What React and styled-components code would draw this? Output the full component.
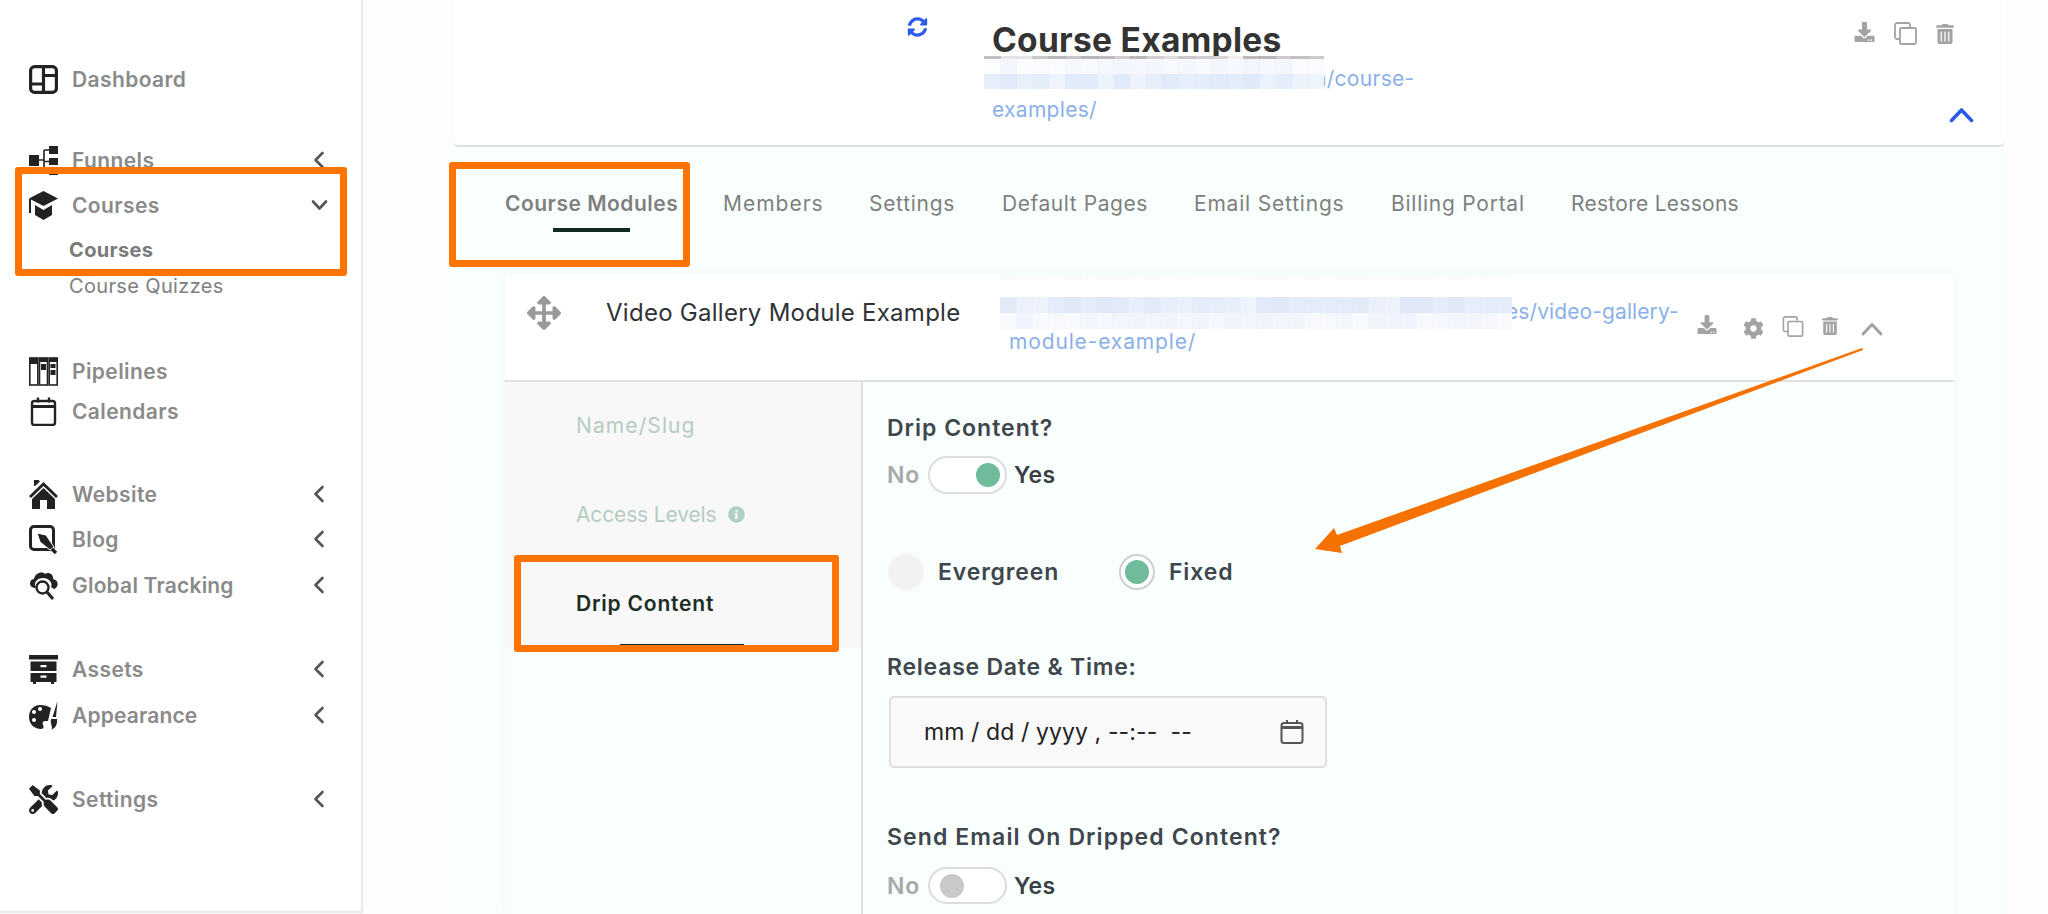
import React from "react";
import styled, { createGlobalStyle } from "styled-components";
import { FaSyncAlt, FaArrowsAlt, FaCog, FaTrashAlt, FaInfoCircle, FaDownload, FaTools } from "react-icons/fa";

const Global = createGlobalStyle`
  html, body { margin: 0; padding: 0; background: #fff; overflow: hidden; }
  body { font-family: Inter, "Open Sans", sans-serif; }
  * { box-sizing: border-box; }
`;

const Page = styled.div`
  position: relative;
  display: flex;
  width: 2048px;
  height: 914px;
  overflow: hidden;
  background: #fdfdfd;
`;

/* ---------- sidebar ---------- */
const Sidebar = styled.aside`
  flex: 0 0 363px;
  height: 913px;
  padding: 64px 36px 0 29px;
  background: #fff;
  border-right: 2px solid #e9e9e9;
  border-bottom: 2px solid #e9e9e9;
`;
const NavRow = styled.div`
  display: flex;
  align-items: center;
  height: 30px;
  margin-top: ${p => p.$mt || 0}px;
  gap: 14px;
`;
const NavIcon = styled.span`
  flex: 0 0 29px;
  width: 29px;
  height: 29px;
  color: #222;
  display: block;
  svg { display: block; width: 29px; height: 29px; }
`;
const NavLabel = styled.span`
  font-size: 21px;
  font-weight: 600;
  letter-spacing: ${p => p.$ls ?? 0.4}px;
  color: #8a8a8a;
`;
const NavChevron = styled.svg`
  margin-left: auto;
  width: 12px;
  height: 18px;
  fill: none;
  stroke: #555;
  stroke-width: 2.6;
  stroke-linecap: round;
  stroke-linejoin: round;
`;
const NavChevronDown = styled.svg`
  margin-left: auto;
  margin-right: -3px;
  width: 17px;
  height: 12px;
  fill: none;
  stroke: #555;
  stroke-width: 2.6;
  stroke-linecap: round;
  stroke-linejoin: round;
`;
const SubRow = styled.div`
  height: 30px;
  line-height: 30px;
  margin-top: ${p => p.$mt}px;
  margin-left: 40px;
  font-size: 20px;
  letter-spacing: 0.35px;
  font-weight: ${p => (p.$active ? 700 : 400)};
  color: ${p => (p.$active ? "#7a7a7a" : "#808080")};
`;

/* ---------- main ---------- */
const Main = styled.main`
  flex: 1;
  padding-left: 90px;
  height: 914px;
  overflow: hidden;
`;
const Panel = styled.div`
  width: 1552px;
  height: 914px;
  background: #f8fffc;
`;
const CourseCard = styled.section`
  display: flex;
  height: 147px;
  padding: 0 31px 0 454px;
  background: #fff;
  border-bottom: 2px solid #dedede;
  border-radius: 0 0 6px 6px;
`;
const RefreshIcon = styled.span`
  color: #2a5bea;
  margin-top: 17px;
  width: 21px;
  height: 20px;
  svg { display: block; width: 21px; height: 20px; }
`;
const TitleBlock = styled.div`
  position: relative;
  margin-left: 64px;
  width: 428px;
  padding-top: 20px;
`;
const CourseTitle = styled.h1`
  margin: 0 0 3px;
  font-size: 33.5px;
  line-height: 40px;
  font-weight: 700;
  letter-spacing: 0.3px;
  color: #333;
`;
const LinkText = styled.a`
  display: block;
  font-size: 21px;
  line-height: ${p => p.$lh}px;
  text-indent: ${p => p.$indent}px;
  letter-spacing: 0.3px;
  color: #8ab0ea;
  font-weight: 400;
`;
const LinkPart = styled.span`
  letter-spacing: ${p => p.$ls}px;
`;
const MosaicOver = styled.svg`
  position: absolute;
  left: ${p => p.$x}px;
  top: ${p => p.$y}px;
  display: block;
`;
const CourseActions = styled.div`
  margin-left: auto;
  display: flex;
  flex-direction: column;
  width: 121px;
  padding-top: 22px;
`;
const IconRow = styled.div`
  display: flex;
  align-items: flex-start;
  color: #a3a3a3;
`;
const ToolIcon = styled.span`
  display: block;
  width: ${p => p.$w}px;
  height: ${p => p.$h}px;
  margin-left: ${p => p.$ml || 0}px;
  margin-top: ${p => p.$mt || 0}px;
  color: #a3a3a3;
  svg { display: block; width: 100%; height: 100%; }
`;
const CollapseBlue = styled.svg`
  align-self: flex-end;
  margin-top: 62px;
  width: 25px;
  height: 16px;
  fill: none;
  stroke: #2a5bea;
  stroke-width: 3.6;
  stroke-linecap: round;
  stroke-linejoin: round;
`;
const Tabs = styled.nav`
  display: flex;
  align-items: flex-start;
  height: 127px;
  padding: 44px 0 0 52px;
`;
const Tab = styled.div`
  flex: 0 0 ${p => p.$w}px;
  font-size: 21px;
  line-height: 26px;
  letter-spacing: ${p => p.$ls}px;
  font-weight: ${p => (p.$active ? 600 : 400)};
  color: ${p => (p.$active ? "#808080" : "#7f7f7f")};
  white-space: nowrap;
`;
const TabBar = styled.div`
  width: 77px;
  height: 4px;
  margin: 11px 0 0 48px;
  background: #12291f;
`;
const Module = styled.section`
  position: relative;
  margin-left: 52px;
  width: 1449px;
  height: 640px;
  box-shadow: 0 0 8px rgba(0,0,0,0.04);
`;
const ModuleHeader = styled.header`
  display: flex;
  align-items: flex-start;
  height: 108px;
  padding-left: 22px;
  background: #fff;
  border-bottom: 2px solid #e0e0e0;
  border-radius: 6px 6px 0 0;
`;
const MoveIcon = styled.span`
  display: block;
  width: 34px;
  height: 34px;
  margin-top: 22px;
  color: #999;
  svg { display: block; width: 100%; height: 100%; }
`;
const ModuleTitle = styled.h2`
  margin: 26px 0 0 45px;
  width: 403px;
  font-size: 24px;
  line-height: 26px;
  font-weight: 400;
  letter-spacing: 0.27px;
  color: #2f3336;
  white-space: nowrap;
`;
const ModuleLink = styled.div`
  position: relative;
  width: 680px;
  margin-top: 23px;
`;
const ModuleActions = styled.div`
  display: flex;
  align-items: flex-start;
  margin-left: 8px;
  padding-top: 41px;
`;
const CollapseGray = styled.svg`
  margin-left: 23px;
  margin-top: 7px;
  width: 22px;
  height: 14px;
  fill: none;
  stroke: #a0a0a0;
  stroke-width: 2.8;
  stroke-linecap: round;
  stroke-linejoin: round;
`;
const ModuleBody = styled.div`
  display: flex;
  height: 532px;
`;
const LeftColumn = styled.div`
  flex: 0 0 358px;
  border-right: 2px solid #dfdfdf;
`;
const SideNav = styled.div`
  height: 266px;
  background: #f8f8f8;
`;
const SideItem = styled.div`
  position: relative;
  display: flex;
  align-items: center;
  gap: 12px;
  height: 89px;
  padding: 0 0 2px 71px;
  font-size: 21px;
  letter-spacing: ${p => p.$ls}px;
  font-weight: ${p => (p.$active ? 600 : 400)};
  color: ${p => (p.$active ? "#1a2d24" : "#b5ccc2")};
  ${p => p.$active && `
    &::after {
      content: "";
      position: absolute;
      left: 115px;
      bottom: 2px;
      width: 124px;
      height: 3px;
      background: #12291f;
    }
  `}
`;
const InfoIcon = styled.span`
  display: block;
  width: 17px;
  height: 17px;
  color: #afd0c3;
  svg { display: block; width: 17px; height: 17px; }
`;
const FormColumn = styled.div`
  flex: 1;
  padding: 33px 0 0 24px;
`;
const FieldLabel = styled.div`
  font-size: 23px;
  line-height: 26px;
  font-weight: 600;
  letter-spacing: ${p => p.$ls}px;
  color: #3f464d;
  margin-top: ${p => p.$mt || 0}px;
`;
const ToggleRow = styled.div`
  display: flex;
  align-items: center;
  height: ${p => p.$h}px;
  margin-top: ${p => p.$mt}px;
`;
const ToggleNo = styled.span`
  flex: 0 0 41px;
  font-size: 23px;
  font-weight: 600;
  letter-spacing: 0.9px;
  color: #a9a9a9;
`;
const ToggleYes = styled.span`
  margin-left: 7px;
  font-size: 23px;
  font-weight: 600;
  letter-spacing: 0.4px;
  color: #3a3f46;
`;
const ToggleTrack = styled.span`
  display: flex;
  align-items: center;
  justify-content: ${p => (p.$on ? "flex-end" : "flex-start")};
  width: 79px;
  height: 100%;
  padding: 0 ${p => (p.$on ? 5 : 10)}px;
  background: #fff;
  border: 2px solid #dcdcdc;
  border-radius: 20px;
`;
const ToggleKnob = styled.span`
  width: 24px;
  height: 24px;
  border-radius: 50%;
  background: ${p => (p.$on ? "#6fbb9b" : "#c9c9c9")};
`;
const RadioRow = styled.div`
  display: flex;
  align-items: center;
  height: 36px;
  margin: 60px 0 0 1px;
`;
const RadioOption = styled.label`
  display: flex;
  align-items: center;
  gap: 14px;
  width: ${p => p.$w}px;
  font-size: 23px;
  font-weight: 600;
  letter-spacing: 0.85px;
  color: #3f464d;
`;
const RadioDot = styled.span`
  display: flex;
  align-items: center;
  justify-content: center;
  width: 36px;
  height: 36px;
  border-radius: 50%;
  background: ${p => (p.$on ? "#fff" : "#f2f2f2")};
  border: ${p => (p.$on ? "2px solid #cfcfcf" : "none")};
  &::after {
    content: "";
    display: ${p => (p.$on ? "block" : "none")};
    width: 24px;
    height: 24px;
    border-radius: 50%;
    background: #6fbb9b;
  }
`;
const DateField = styled.div`
  display: flex;
  align-items: center;
  width: 438px;
  height: 72px;
  margin-top: 16px;
  margin-left: 2px;
  padding: 0 21px 0 33px;
  background: #f9f9f9;
  border: 2px solid #e0e0e0;
  border-radius: 5px;
  font-size: 23px;
  letter-spacing: 0.1px;
  color: #222;
  white-space: pre;
`;
const CalendarIcon = styled.svg`
  margin-left: auto;
  width: 24px;
  height: 24px;
  fill: none;
  stroke: #555;
  stroke-width: 2;
`;

/* ---------- annotations ---------- */
const Callout = styled.div`
  position: absolute;
  left: ${p => p.$x}px;
  top: ${p => p.$y}px;
  width: ${p => p.$w}px;
  height: ${p => p.$h}px;
  border: 7px solid #ff7300;
  border-radius: 3px;
  pointer-events: none;
`;
const ArrowLayer = styled.svg`
  position: absolute;
  left: 0;
  top: 0;
  width: 2048px;
  height: 914px;
  pointer-events: none;
`;

/* ---------- drawings ---------- */
const chevronLeft = (
  <NavChevron viewBox="0 0 12 18"><path d="M9.5 2 L2.5 9 L9.5 16" /></NavChevron>
);

const icons = {
  dashboard: (
    <svg viewBox="0 0 29 29" fill="none" stroke="currentColor" strokeWidth="3.2">
      <rect x="1.6" y="1.6" width="25.8" height="25.8" rx="4" />
      <path d="M14.5 2v25M2 19h12.5M14.5 10.5H27" />
    </svg>
  ),
  funnels: (
    <svg viewBox="0 0 29 29" fill="currentColor">
      <rect x="0" y="9" width="10" height="11" />
      <rect x="20" y="0" width="9" height="8" />
      <rect x="20" y="12" width="9" height="7" />
      <rect x="20" y="22" width="9" height="7" />
      <path d="M10 14h5M15 4h5M15 15.5h5M15 25h5M15 4v21" stroke="currentColor" strokeWidth="1.6" fill="none" />
    </svg>
  ),
  courses: (
    <svg viewBox="0 0 29 29" fill="currentColor">
      <path d="M14.5 0 L29 7.5 L14.5 15 L0 7.5 Z" />
      <path d="M0 8 h2 v14 h-2 z" />
      <path d="M6 14 L14.5 19 L23 14 V24 L14.5 29 L6 24 Z" />
    </svg>
  ),
  pipelines: (
    <svg viewBox="0 0 29 29">
      <g fill="#fff" stroke="currentColor" strokeWidth="1.6">
        <rect x="0.8" y="1" width="8" height="27" />
        <rect x="10.5" y="1" width="8" height="27" />
        <rect x="20.2" y="1" width="8" height="27" />
      </g>
      <g fill="currentColor">
        <rect x="0.8" y="1" width="8" height="6" />
        <rect x="10.5" y="1" width="8" height="4" />
        <rect x="12" y="7" width="5" height="6" />
        <rect x="20.2" y="1" width="8" height="4" />
        <rect x="21.5" y="7" width="5" height="4" />
        <rect x="21.5" y="13" width="5" height="5" />
      </g>
    </svg>
  ),
  calendar: (
    <svg viewBox="0 0 29 29" fill="none" stroke="currentColor" strokeWidth="2.4">
      <rect x="3" y="4" width="23" height="24" rx="2.5" />
      <path d="M3 9.5h23" strokeWidth="3" />
      <path d="M9 0.5v5M20 0.5v5" />
    </svg>
  ),
  website: (
    <svg viewBox="0 0 29 29" fill="currentColor">
      <path d="M14.5 2 L29 16 L27 18 L14.5 6 L2 18 L0 16 Z" />
      <path d="M5 0 h4.5 L11 1.5 L6 6 H5 Z" />
      <path d="M14.5 8 L26 19 V29 H18 V20 H11 V29 H3 V19 Z" />
    </svg>
  ),
  blog: (
    <svg viewBox="0 0 29 29">
      <rect x="1.5" y="1.5" width="23" height="23" rx="3.5" fill="none" stroke="currentColor" strokeWidth="3" />
      <path d="M8 8 L17 10 L25 22 L21 25 L11 17 Z" fill="currentColor" stroke="#fff" strokeWidth="1" />
      <path d="M23 24 L27 28" stroke="currentColor" strokeWidth="3.4" />
    </svg>
  ),
  tracking: (
    <svg viewBox="0 0 29 29" fill="none" stroke="currentColor">
      <path d="M6 17 C0 17 -1 9 5 8 C6 2 13 0 16 3 C20 0 25 4 24 8 C30 9 30 16 25 18 L22 16 C24 12 20 7 14 7 C8 7 4 12 7 17 Z" fill="currentColor" stroke="none" />
      <circle cx="13.5" cy="16.5" r="6" strokeWidth="2.4" />
      <path d="M18 21 L24 28" strokeWidth="3" />
    </svg>
  ),
  assets: (
    <svg viewBox="0 0 29 29" fill="currentColor">
      <rect x="0" y="0" width="29" height="4.5" />
      <path d="M1.5 6.5 H27.5 V16 H1.5 Z M11.5 10 v2.2 h6 V10 Z" fillRule="evenodd" />
      <path d="M1.5 18 H27.5 V27 H25 V29 H22 V27 H7 V29 H4 V27 H1.5 Z M11.5 20.5 v2.2 h6 V20.5 Z" fillRule="evenodd" />
    </svg>
  ),
  appearance: (
    <svg viewBox="0 0 29 29" fill="currentColor">
      <path d="M11 4 C4 4 0 10 0 16 C0 23 5 28 12 28 C15 28 15 25 14 24 C13 22 14 20 16 20 H19 L22 7 C19 5 15 4 11 4 Z M5 13 a2 2 0 1 1 .01 0 Z M11 10 a2 2 0 1 1 .01 0 Z M5 21 a2 2 0 1 1 .01 0 Z" fillRule="evenodd" />
      <path d="M28.5 0 L27 16 H23.5 Z" />
      <path d="M22 18 H28 C28.5 23 27 27 22.5 28.5 C24 25 21 23 22 18 Z" />
    </svg>
  ),
};

const copyIcon = (
  <svg viewBox="0 0 23 23" fill="none" stroke="currentColor" strokeWidth="1.8">
    <path d="M5 17 H3 a2 2 0 0 1 -2 -2 V3 a2 2 0 0 1 2 -2 H14 a2 2 0 0 1 2 2 V5" />
    <rect x="6" y="6" width="16" height="16" rx="1.5" />
  </svg>
);

const hash = (i, j) => {
  const v = Math.sin(i * 12.9898 + j * 78.233) * 43758.5453;
  return v - Math.floor(v);
};

function Mosaic({ x, y, cols, cell = 16, bands }) {
  const totalH = bands.reduce((s, b) => s + b.h, 0);
  const w = cols * cell;
  let top = 0;
  return (
    <MosaicOver $x={x} $y={y} width={w} height={totalH} viewBox={`0 0 ${w} ${totalH}`}>
      <rect width={w} height={totalH} fill="#fff" />
      {bands.map((b, j) => {
        const yy = top;
        top += b.h;
        return Array.from({ length: cols }, (_, i) => (
          <rect
            key={`${j}-${i}`}
            x={i * cell}
            y={yy}
            width={cell + 0.5}
            height={b.h}
            fill={b.base}
            opacity={b.min + (b.max - b.min) * hash(i + 3, j + 5)}
          />
        ));
      })}
    </MosaicOver>
  );
}

const navTop = (
  <>
    <NavRow>
      <NavIcon>{icons.dashboard}</NavIcon>
      <NavLabel>Dashboard</NavLabel>
    </NavRow>
    <NavRow $mt={51}>
      <NavIcon>{icons.funnels}</NavIcon>
      <NavLabel>Funnels</NavLabel>
      {chevronLeft}
    </NavRow>
    <NavRow $mt={15}>
      <NavIcon>{icons.courses}</NavIcon>
      <NavLabel>Courses</NavLabel>
      <NavChevronDown viewBox="0 0 17 12"><path d="M2 2.5 L8.5 9.5 L15 2.5" /></NavChevronDown>
    </NavRow>
    <SubRow $mt={15} $active>Courses</SubRow>
    <SubRow $mt={6}>Course Quizzes</SubRow>
  </>
);

const navRest = [
  { key: "pipelines", label: "Pipelines", mt: 55 },
  { key: "calendar", label: "Calendars", mt: 10 },
  { key: "website", label: "Website", mt: 53, chev: true },
  { key: "blog", label: "Blog", mt: 15, chev: true },
  { key: "tracking", label: "Global Tracking", mt: 16, chev: true, ls: 0.2 },
  { key: "assets", label: "Assets", mt: 54, chev: true },
  { key: "appearance", label: "Appearance", mt: 16, chev: true, ls: 0.15 },
  { key: "settings", label: "Settings", mt: 54, chev: true },
];

const tabs = [
  { label: "Course Modules", w: 218, ls: 0.5, active: true },
  { label: "Members", w: 146, ls: 1 },
  { label: "Settings", w: 133, ls: 0.7 },
  { label: "Default Pages", w: 192, ls: 0.56 },
  { label: "Email Settings", w: 197, ls: 0.8 },
  { label: "Billing Portal", w: 180, ls: 0.75 },
  { label: "Restore Lessons", w: 175, ls: 0.27 },
];

export default function App() {
  return (
    <Page>
      <Global />
      <Sidebar>
        {navTop}
        {navRest.map(n => (
          <NavRow key={n.key} $mt={n.mt}>
            <NavIcon>{n.key === "settings" ? <FaTools /> : icons[n.key]}</NavIcon>
            <NavLabel $ls={n.ls}>{n.label}</NavLabel>
            {n.chev && chevronLeft}
          </NavRow>
        ))}
      </Sidebar>

      <Main>
        <Panel>
          <CourseCard>
            <RefreshIcon><FaSyncAlt /></RefreshIcon>
            <TitleBlock>
              <CourseTitle>Course Examples</CourseTitle>
              <LinkText $lh={31} $indent={316}>m/course-examples/</LinkText>
              <Mosaic
                x={-8}
                y={56}
                cols={21}
                cell={16.2}
                bands={[
                  { h: 3, base: "#777", min: 0.1, max: 0.55 },
                  { h: 15, base: "#e4ebf9", min: 0.1, max: 0.5 },
                  { h: 15, base: "#d9e5f7", min: 0.4, max: 0.85 },
                ]}
              />
            </TitleBlock>
            <CourseActions>
              <IconRow>
                <ToolIcon $w={23} $h={20}><FaDownload /></ToolIcon>
                <ToolIcon $w={23} $h={23} $ml={18}>{copyIcon}</ToolIcon>
                <ToolIcon $w={18} $h={20} $ml={19} $mt={2}><FaTrashAlt /></ToolIcon>
              </IconRow>
              <CollapseBlue viewBox="0 0 25 16"><path d="M2.5 13.5 L12.5 3 L22.5 13.5" /></CollapseBlue>
            </CourseActions>
          </CourseCard>

          <Tabs>
            {tabs.map(t => (
              <Tab key={t.label} $w={t.w} $ls={t.ls} $active={t.active}>
                {t.label}
                {t.active && <TabBar />}
              </Tab>
            ))}
          </Tabs>

          <Module>
            <ModuleHeader>
              <MoveIcon><FaArrowsAlt /></MoveIcon>
              <ModuleTitle>Video Gallery Module Example</ModuleTitle>
              <ModuleLink>
                <LinkText $lh={30} $indent={497}>
                  <LinkPart $ls={0.1}>es/video-gallery-</LinkPart>
                  <LinkPart $ls={0.85}>module-example/</LinkPart>
                </LinkText>
                <Mosaic
                  x={-9}
                  y={0}
                  cols={32}
                  bands={[
                    { h: 16, base: "#dde6f8", min: 0.45, max: 0.9 },
                    { h: 16, base: "#e3e9f8", min: 0.2, max: 0.55 },
                  ]}
                />
                <Mosaic
                  x={-9}
                  y={-23}
                  cols={32}
                  bands={[{ h: 6, base: "#f1f4f8", min: 0.2, max: 0.5 }]}
                />
              </ModuleLink>
              <ModuleActions>
                <ToolIcon $w={20} $h={19}><FaDownload /></ToolIcon>
                <ToolIcon $w={21} $h={21} $ml={26} $mt={3}><FaCog /></ToolIcon>
                <ToolIcon $w={22} $h={21} $ml={18} $mt={1}>{copyIcon}</ToolIcon>
                <ToolIcon $w={16} $h={18} $ml={18} $mt={2}><FaTrashAlt /></ToolIcon>
                <CollapseGray viewBox="0 0 22 14"><path d="M2 12 L11 2.5 L20 12" /></CollapseGray>
              </ModuleActions>
            </ModuleHeader>

            <ModuleBody>
              <LeftColumn>
                <SideNav>
                  <SideItem $ls={1.1}>Name/Slug</SideItem>
                  <SideItem $ls={-0.15}>Access Levels <InfoIcon><FaInfoCircle /></InfoIcon></SideItem>
                  <SideItem $ls={0.8} $active>Drip Content</SideItem>
                </SideNav>
              </LeftColumn>
              <FormColumn>
                <FieldLabel $ls={1}>Drip Content?</FieldLabel>
                <ToggleRow $h={38} $mt={15}>
                  <ToggleNo>No</ToggleNo>
                  <ToggleTrack $on><ToggleKnob $on /></ToggleTrack>
                  <ToggleYes>Yes</ToggleYes>
                </ToggleRow>
                <RadioRow>
                  <RadioOption $w={231}><RadioDot />Evergreen</RadioOption>
                  <RadioOption $w={130}><RadioDot $on />Fixed</RadioOption>
                </RadioRow>
                <FieldLabel $mt={64} $ls={0.76}>Release Date &amp; Time:</FieldLabel>
                <DateField>
                  mm / dd / yyyy , --:--  --
                  <CalendarIcon viewBox="0 0 24 24">
                    <rect x="1.5" y="3" width="21" height="20" rx="2.5" />
                    <path d="M1.5 7.5h21" strokeWidth="3" />
                    <path d="M7 0v4M17 0v4" />
                  </CalendarIcon>
                </DateField>
                <FieldLabel $mt={56} $ls={1.1}>Send Email On Dripped Content?</FieldLabel>
                <ToggleRow $h={37} $mt={17}>
                  <ToggleNo>No</ToggleNo>
                  <ToggleTrack><ToggleKnob /></ToggleTrack>
                  <ToggleYes>Yes</ToggleYes>
                </ToggleRow>
              </FormColumn>
            </ModuleBody>
          </Module>
        </Panel>
      </Main>

      <Callout $x={15} $y={167} $w={332} $h={109} />
      <Callout $x={449} $y={162} $w={241} $h={105} />
      <Callout $x={514} $y={555} $w={325} $h={97} />
      <ArrowLayer viewBox="0 0 2048 914">
        <path d="M1862 348 L1337 535 L1334 528 L1315 549 L1342 553 L1340 546 L1863 350 Z" fill="#f57200" />
      </ArrowLayer>
    </Page>
  );
}
